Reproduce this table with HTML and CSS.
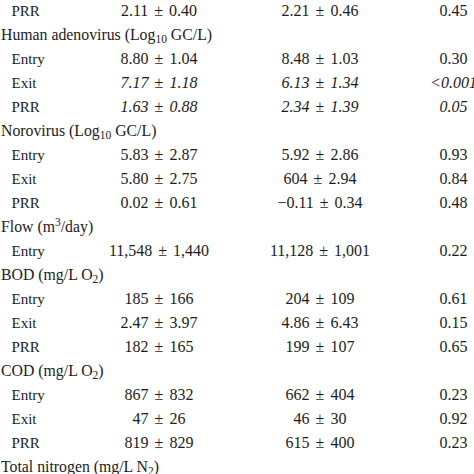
FILE: index.html
```html
<!DOCTYPE html>
<html>
<head>
<meta charset="utf-8">
<link rel="stylesheet" href="styles.css">
</head>
<body>
<div class="table">
  <div class="sub">PRR</div><div class="v2">2.11 ± 0.40</div><div class="v3">2.21 ± 0.46</div><div class="v4">0.45</div>

  <div class="group">Human adenovirus (Log<sub>10</sub> GC/L)</div>
  <div class="sub">Entry</div><div class="v2">8.80 ± 1.04</div><div class="v3">8.48 ± 1.03</div><div class="v4">0.30</div>
  <div class="sub">Exit</div><div class="v2"><i>7.17</i> ± <i>1.18</i></div><div class="v3"><i>6.13</i> ± <i>1.34</i></div><div class="v4"><i>&lt;0.001</i></div>
  <div class="sub">PRR</div><div class="v2"><i>1.63</i> ± <i>0.88</i></div><div class="v3"><i>2.34</i> ± <i>1.39</i></div><div class="v4"><i>0.05</i></div>

  <div class="group">Norovirus (Log<sub>10</sub> GC/L)</div>
  <div class="sub">Entry</div><div class="v2">5.83 ± 2.87</div><div class="v3">5.92 ± 2.86</div><div class="v4">0.93</div>
  <div class="sub">Exit</div><div class="v2">5.80 ± 2.75</div><div class="v3">604 ± 2.94</div><div class="v4">0.84</div>
  <div class="sub">PRR</div><div class="v2">0.02 ± 0.61</div><div class="v3">−0.11 ± 0.34</div><div class="v4">0.48</div>

  <div class="group">Flow (m<sup>3</sup>/day)</div>
  <div class="sub">Entry</div><div class="v2">11,548 ± 1,440</div><div class="v3">11,128 ± 1,001</div><div class="v4">0.22</div>

  <div class="group">BOD (mg/L O<sub>2</sub>)</div>
  <div class="sub">Entry</div><div class="v2">185 ± 166</div><div class="v3">204 ± 109</div><div class="v4">0.61</div>
  <div class="sub">Exit</div><div class="v2">2.47 ± 3.97</div><div class="v3">4.86 ± 6.43</div><div class="v4">0.15</div>
  <div class="sub">PRR</div><div class="v2">182 ± 165</div><div class="v3">199 ± 107</div><div class="v4">0.65</div>

  <div class="group">COD (mg/L O<sub>2</sub>)</div>
  <div class="sub">Entry</div><div class="v2">867 ± 832</div><div class="v3">662 ± 404</div><div class="v4">0.23</div>
  <div class="sub">Exit</div><div class="v2">47 ± 26</div><div class="v3">46 ± 30</div><div class="v4">0.92</div>
  <div class="sub">PRR</div><div class="v2">819 ± 829</div><div class="v3">615 ± 400</div><div class="v4">0.23</div>

  <div class="group">Total nitrogen (mg/L N<sub>2</sub>)</div>
</div>
</body>
</html>
```

FILE: styles.css
```css
html, body {
  margin: 0;
  padding: 0;
  background: #ffffff;
  overflow: hidden;
}
body {
  width: 474px;
  height: 474px;
  font-family: "Liberation Serif", "Times New Roman", serif;
  font-size: 16px;
  color: #1c1c1c;
}
.table {
  display: grid;
  grid-template-columns: 80px 158px 164px 103px;
  grid-auto-rows: 24px;
  line-height: 24px;
  margin-top: -1px;
  white-space: nowrap;
}
.group {
  grid-column: 1 / 5;
  font-size: 15.8px;
  padding-left: 1px;
}
.sub {
  font-size: 15px;
  padding-left: 11.5px;
}
.v2, .v3, .v4 {
  text-align: center;
  word-spacing: 2px;
}
sub {
  font-size: 11.5px;
  line-height: 0;
  vertical-align: -3px;
}
sup {
  font-size: 11.5px;
  line-height: 0;
  vertical-align: 6px;
}
```
